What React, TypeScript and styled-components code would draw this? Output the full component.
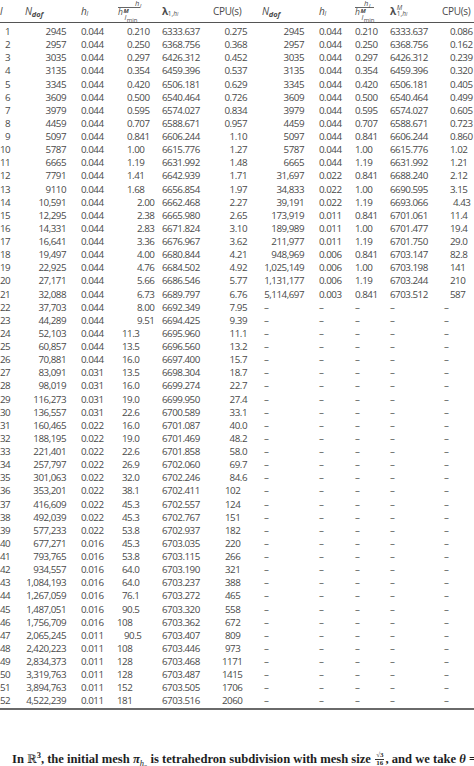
import React from 'react';
import styled, { createGlobalStyle } from 'styled-components';

const Global = createGlobalStyle`
  html, body { margin: 0; padding: 0; background: #ffffff; }
  body { width: 474px; height: 766px; overflow: hidden; }
`;

const COLS = '14px 56px 45px 45px 50px 46px 54px 40px 35px 55px 34px';

const Page = styled.div`
  width: 474px;
  height: 766px;
  overflow: hidden;
`;

const Grid = styled.div`
  display: grid;
  grid-template-columns: ${COLS};
  font-family: 'Open Sans', 'Noto Sans', sans-serif;
  font-size: 9.8px;
  letter-spacing: -0.5px;
  color: #4a4a4a;
`;

const Head = styled(Grid)`
  height: 22px;
  border-bottom: 1px solid #555;
`;

const Body = styled(Grid)`
  grid-auto-rows: 13.13px;
  margin-top: 2px;
  border-bottom: 2px solid #6a6a6a;
`;

const Cell = styled.div<{ $align: 'left' | 'right'; $pad: number }>`
  white-space: nowrap;
  line-height: 13.13px;
  text-align: ${(p) => p.$align};
  ${(p) => (p.$align === 'right' ? `padding-right: ${p.$pad}px;` : `padding-left: ${p.$pad}px;`)}
`;

const HeadCell = styled.div<{ $pad: number }>`
  display: flex;
  align-items: center;
  padding-left: ${(p) => p.$pad}px;
  white-space: nowrap;
  font-size: 10px;
  letter-spacing: -0.3px;
`;

const It = styled.span`
  font-style: italic;
`;

const Sub = styled.span<{ $bold?: boolean; $size?: number }>`
  font-size: ${(p) => p.$size ?? 7}px;
  position: relative;
  top: 2.5px;
  font-weight: ${(p) => (p.$bold ? 700 : 400)};
  letter-spacing: 0;
`;

const Lambda = styled.span`
  font-weight: 700;
  font-size: 10px;
`;

const SupSub = styled.span`
  display: inline-flex;
  flex-direction: column;
  font-size: 6.5px;
  line-height: 6.5px;
  margin-left: 1px;
  letter-spacing: 0;
`;

const Frac = styled.span`
  display: inline-flex;
  flex-direction: column;
  margin-top: -1px;
  font-style: italic;
  letter-spacing: 0;
`;

const FracNum = styled.span<{ $shift: number }>`
  font-size: 7.5px;
  line-height: 8px;
  height: 8px;
  padding-left: ${(p) => p.$shift}px;
`;

const FracBar = styled.span<{ $w: number }>`
  width: ${(p) => p.$w}px;
  border-top: 1px solid #666;
`;

const FracDen = styled.span`
  display: flex;
  align-items: flex-start;
  font-size: 8.5px;
  line-height: 8px;
  height: 14px;
`;

const DenStack = styled.span`
  display: inline-flex;
  flex-direction: column;
  font-size: 6px;
  line-height: 6px;
  margin-left: 0.5px;
`;

const Lmin = styled.span`
  font-size: 7px;
  line-height: 7px;
  margin-left: 1px;
`;

const MinSub = styled.span<{ $italic?: boolean }>`
  font-size: 6px;
  font-style: ${(p) => (p.$italic ? 'italic' : 'normal')};
  position: relative;
  top: 2px;
  margin-left: 0.5px;
`;

const Para = styled.p`
  margin: 41px 0 0 12px;
  font-family: 'Liberation Serif', 'DejaVu Serif', serif;
  font-weight: 700;
  font-size: 12.6px;
  line-height: 16px;
  color: #1e1e1e;
  white-space: nowrap;
`;

const DS = styled.span`
  font-family: 'DejaVu Serif', serif;
  font-weight: 400;
  font-size: 11.5px;
`;

const Sup = styled.sup`
  font-size: 8.5px;
  line-height: 0;
`;

const PSub = styled.sub`
  font-size: 8.5px;
  line-height: 0;
  font-style: italic;
  font-weight: 400;
`;

const PSubSub = styled.sub`
  font-size: 6.5px;
  font-style: normal;
`;

const SmallFrac = styled.span`
  display: inline-flex;
  flex-direction: column;
  align-items: center;
  vertical-align: middle;
  font-size: 7px;
  line-height: 7.5px;
  margin: 0 1px;
`;

const SmallNum = styled.span`
  border-bottom: 1px solid #333;
  padding: 0 1px;
`;

type Row5 = [string, string, string, string, string];

const left: Row5[] = [
  ['2945', '0.044', '0.210', '6333.637', '0.275'],
  ['2957', '0.044', '0.250', '6368.756', '0.368'],
  ['3035', '0.044', '0.297', '6426.312', '0.452'],
  ['3135', '0.044', '0.354', '6459.396', '0.537'],
  ['3345', '0.044', '0.420', '6506.181', '0.629'],
  ['3609', '0.044', '0.500', '6540.464', '0.726'],
  ['3979', '0.044', '0.595', '6574.027', '0.834'],
  ['4459', '0.044', '0.707', '6588.671', '0.957'],
  ['5097', '0.044', '0.841', '6606.244', '1.10'],
  ['5787', '0.044', '1.00', '6615.776', '1.27'],
  ['6665', '0.044', '1.19', '6631.992', '1.48'],
  ['7791', '0.044', '1.41', '6642.939', '1.71'],
  ['9110', '0.044', '1.68', '6656.854', '1.97'],
  ['10,591', '0.044', '2.00', '6662.468', '2.27'],
  ['12,295', '0.044', '2.38', '6665.980', '2.65'],
  ['14,331', '0.044', '2.83', '6671.824', '3.10'],
  ['16,641', '0.044', '3.36', '6676.967', '3.62'],
  ['19,497', '0.044', '4.00', '6680.844', '4.21'],
  ['22,925', '0.044', '4.76', '6684.502', '4.92'],
  ['27,171', '0.044', '5.66', '6686.546', '5.77'],
  ['32,088', '0.044', '6.73', '6689.797', '6.76'],
  ['37,703', '0.044', '8.00', '6692.349', '7.95'],
  ['44,289', '0.044', '9.51', '6694.425', '9.39'],
  ['52,103', '0.044', '11.3', '6695.960', '11.1'],
  ['60,857', '0.044', '13.5', '6696.560', '13.2'],
  ['70,881', '0.044', '16.0', '6697.400', '15.7'],
  ['83,091', '0.031', '13.5', '6698.304', '18.7'],
  ['98,019', '0.031', '16.0', '6699.274', '22.7'],
  ['116,273', '0.031', '19.0', '6699.950', '27.4'],
  ['136,557', '0.031', '22.6', '6700.589', '33.1'],
  ['160,465', '0.022', '16.0', '6701.087', '40.0'],
  ['188,195', '0.022', '19.0', '6701.469', '48.2'],
  ['221,401', '0.022', '22.6', '6701.858', '58.0'],
  ['257,797', '0.022', '26.9', '6702.060', '69.7'],
  ['301,063', '0.022', '32.0', '6702.246', '84.6'],
  ['353,201', '0.022', '38.1', '6702.411', '102'],
  ['416,609', '0.022', '45.3', '6702.557', '124'],
  ['492,039', '0.022', '45.3', '6702.767', '151'],
  ['577,233', '0.022', '53.8', '6702.937', '182'],
  ['677,271', '0.016', '45.3', '6703.035', '220'],
  ['793,765', '0.016', '53.8', '6703.115', '266'],
  ['934,557', '0.016', '64.0', '6703.190', '321'],
  ['1,084,193', '0.016', '64.0', '6703.237', '388'],
  ['1,267,059', '0.016', '76.1', '6703.272', '465'],
  ['1,487,051', '0.016', '90.5', '6703.320', '558'],
  ['1,756,709', '0.016', '108', '6703.362', '672'],
  ['2,065,245', '0.011', '90.5', '6703.407', '809'],
  ['2,420,223', '0.011', '108', '6703.446', '973'],
  ['2,834,373', '0.011', '128', '6703.468', '1171'],
  ['3,319,763', '0.011', '128', '6703.487', '1415'],
  ['3,894,763', '0.011', '152', '6703.505', '1706'],
  ['4,522,239', '0.011', '181', '6703.516', '2060'],
];

const rightData: Row5[] = [
  ['2945', '0.044', '0.210', '6333.637', '0.086'],
  ['2957', '0.044', '0.250', '6368.756', '0.162'],
  ['3035', '0.044', '0.297', '6426.312', '0.239'],
  ['3135', '0.044', '0.354', '6459.396', '0.320'],
  ['3345', '0.044', '0.420', '6506.181', '0.405'],
  ['3609', '0.044', '0.500', '6540.464', '0.499'],
  ['3979', '0.044', '0.595', '6574.027', '0.605'],
  ['4459', '0.044', '0.707', '6588.671', '0.723'],
  ['5097', '0.044', '0.841', '6606.244', '0.860'],
  ['5787', '0.044', '1.00', '6615.776', '1.02'],
  ['6665', '0.044', '1.19', '6631.992', '1.21'],
  ['31,697', '0.022', '0.841', '6688.240', '2.12'],
  ['34,833', '0.022', '1.00', '6690.595', '3.15'],
  ['39,191', '0.022', '1.19', '6693.066', '4.43'],
  ['173,919', '0.011', '0.841', '6701.061', '11.4'],
  ['189,989', '0.011', '1.00', '6701.477', '19.4'],
  ['211,977', '0.011', '1.19', '6701.750', '29.0'],
  ['948,969', '0.006', '0.841', '6703.147', '82.8'],
  ['1,025,149', '0.006', '1.00', '6703.198', '141'],
  ['1,131,177', '0.006', '1.19', '6703.244', '210'],
  ['5,114,697', '0.003', '0.841', '6703.512', '587'],
];

type Spec = [string, 'left' | 'right', number];

function ratioPad(v: string, row: number): number {
  const n = parseFloat(v);
  if (row === 47) return 9;
  if (n < 2) return 12;
  if (n < 10) return 22;
  if (n < 100) return 7;
  return 2;
}

function cpuSpec(v: string): Spec {
  if (v.includes('.')) return [v, 'right', 9];
  if (v.length >= 4) return [v, 'left', 12];
  return [v, 'left', 15];
}

function rowSpecs(i: number): Spec[] {
  const row = i + 1;
  const [n, h, r, l, c] = left[i];
  const specs: Spec[] = [
    [String(row), 'right', 4],
    [n, 'right', 4],
    [h, 'left', 11],
    [r, 'left', ratioPad(r, row)],
    [l, 'left', 2],
    cpuSpec(c),
  ];
  const rd = rightData[i];
  if (rd) {
    specs.push(
      [rd[0], 'right', 6],
      [rd[1], 'left', 9],
      [rd[2], 'left', 5],
      [rd[3], 'left', 5],
      [rd[4], 'left', rd[4] === '4.43' ? 13 : 10],
    );
  } else {
    specs.push(
      ['–', 'left', 8],
      ['–', 'left', 9],
      ['–', 'left', 5],
      ['–', 'left', 5],
      ['–', 'left', 4],
    );
  }
  return specs;
}

const HL = () => (
  <>
    <It>h</It>
    <Sub $size={6.5}>
      <It>l</It>
    </Sub>
  </>
);

const RatioHead: React.FC<{ bar: number; shift: number }> = ({ bar, shift }) => (
  <Frac>
    <FracNum $shift={shift}>
      h<MinSub $italic>l</MinSub>
    </FracNum>
    <FracBar $w={bar} />
    <FracDen>
      h
      <DenStack>
        <b>M</b>
        <Lmin>
          l<MinSub>min</MinSub>
        </Lmin>
      </DenStack>
    </FracDen>
  </Frac>
);

const SmallL = styled.span`
  font-style: italic;
  font-size: 5px;
`;

const LambdaHead: React.FC<{ sup?: boolean }> = ({ sup }) => (
  <>
    <Lambda>λ</Lambda>
    {sup ? (
      <SupSub>
        <It>M</It>
        <span>
          1,<It>h</It>
          <SmallL>l</SmallL>
        </span>
      </SupSub>
    ) : (
      <Sub $size={6.5}>
        1,<It>h</It>
        <SmallL>l</SmallL>
      </Sub>
    )}
  </>
);

const NdofHead = () => (
  <>
    <It>N</It>
    <Sub $bold $size={7.5}>
      <It>dof</It>
    </Sub>
  </>
);

export default function App() {
  return (
    <Page>
      <Global />
      <Head>
        <HeadCell $pad={0}>
          <It>l</It>
        </HeadCell>
        <HeadCell $pad={11}>
          <NdofHead />
        </HeadCell>
        <HeadCell $pad={11}>
          <HL />
        </HeadCell>
        <HeadCell $pad={3}>
          <RatioHead bar={22} shift={17} />
        </HeadCell>
        <HeadCell $pad={2}>
          <LambdaHead />
        </HeadCell>
        <HeadCell $pad={3}>CPU(s)</HeadCell>
        <HeadCell $pad={6}>
          <NdofHead />
        </HeadCell>
        <HeadCell $pad={9}>
          <HL />
        </HeadCell>
        <HeadCell $pad={5}>
          <RatioHead bar={19} shift={9} />
        </HeadCell>
        <HeadCell $pad={5}>
          <LambdaHead sup />
        </HeadCell>
        <HeadCell $pad={2}>CPU(s)</HeadCell>
      </Head>
      <Body>
        {left.map((_, i) =>
          rowSpecs(i).map(([text, align, pad], j) => (
            <Cell key={`${i}-${j}`} $align={align} $pad={pad}>
              {text}
            </Cell>
          )),
        )}
      </Body>
      <Para>
        In <DS>ℝ</DS>
        <Sup>3</Sup>, the initial mesh <i>π</i>
        <PSub>
          h<PSubSub>0</PSubSub>
        </PSub>{' '}
        is tetrahedron subdivision with mesh size{' '}
        <SmallFrac>
          <SmallNum>√3</SmallNum>
          <span>16</span>
        </SmallFrac>
        , and we take <i>θ</i> =
      </Para>
    </Page>
  );
}
